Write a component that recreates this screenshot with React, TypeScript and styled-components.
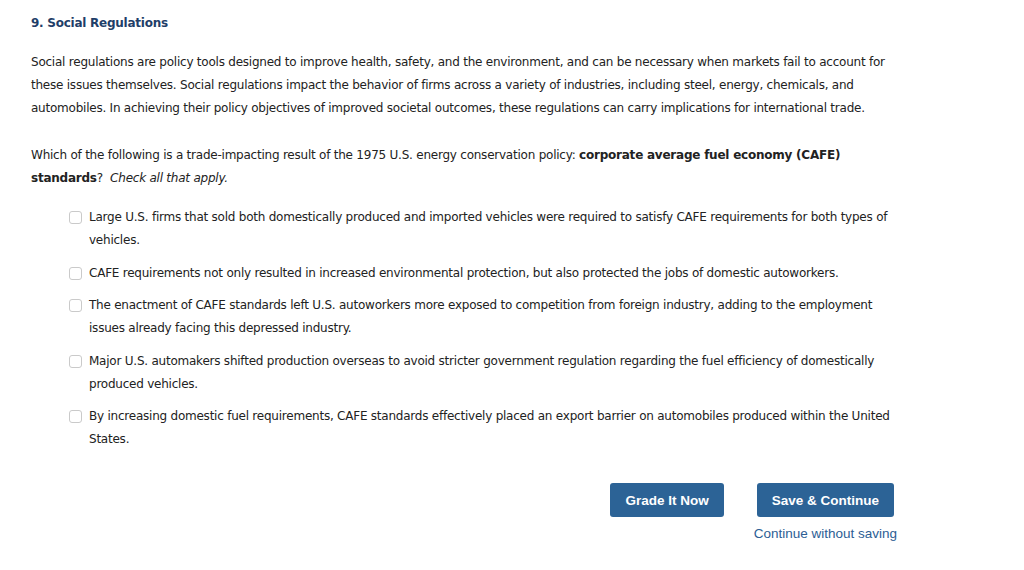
import React from "react";
import styled, { createGlobalStyle } from "styled-components";

const Global = createGlobalStyle`
  html, body { margin: 0; padding: 0; background: #fff; }
  body { font-family: Verdana, "DejaVu Sans", sans-serif; color: #222; }
`;

const Page = styled.div`
  padding: 15px 0 0 31px;
  width: 870px;
`;

const Heading = styled.h2`
  margin: 0;
  font-size: 12px;
  font-weight: bold;
  color: #1f3e68;
  line-height: 16px;
  letter-spacing: -0.25px;
`;

const Para = styled.p<{ $top: number }>`
  margin: ${(p) => p.$top}px 0 0 0;
  font-size: 12px;
  line-height: 23px;
  letter-spacing: -0.23px;
`;

const Options = styled.div`
  margin: 16px 0 0 38px;
  display: flex;
  flex-direction: column;
  gap: 9.6px;
`;

const Option = styled.label`
  display: flex;
  align-items: flex-start;
  gap: 7px;
  font-size: 12px;
  line-height: 23px;
  letter-spacing: -0.23px;
`;

const Box = styled.span`
  flex: none;
  width: 11px;
  height: 11px;
  margin-top: 5px;
  border: 1px solid #cacaca;
  border-radius: 3px;
  background: #fff;
`;

const Actions = styled.div`
  margin-top: 32px;
  margin-right: 4px;
  display: flex;
  justify-content: flex-end;
  gap: 30px;
  align-items: flex-start;
`;

const Col = styled.div`
  display: flex;
  flex-direction: column;
  align-items: center;
`;

const Button = styled.button`
  height: 34px;
  padding: 0 15px;
  border: none;
  border-radius: 3px;
  background: #2c6396;
  color: #fff;
  font-family: "Liberation Sans", Arial, sans-serif;
  font-weight: bold;
  font-size: 13.5px;
  cursor: pointer;
`;

const LinkText = styled.a`
  margin-top: 9px;
  font-family: "Liberation Sans", Arial, sans-serif;
  font-size: 13.5px;
  color: #2c5e94;
  text-decoration: none;
`;

const options = [
  "Large U.S. firms that sold both domestically produced and imported vehicles were required to satisfy CAFE requirements for both types of vehicles.",
  "CAFE requirements not only resulted in increased environmental protection, but also protected the jobs of domestic autoworkers.",
  "The enactment of CAFE standards left U.S. autoworkers more exposed to competition from foreign industry, adding to the employment issues already facing this depressed industry.",
  "Major U.S. automakers shifted production overseas to avoid stricter government regulation regarding the fuel efficiency of domestically produced vehicles.",
  "By increasing domestic fuel requirements, CAFE standards effectively placed an export barrier on automobiles produced within the United States.",
];

export default function App() {
  return (
    <>
      <Global />
      <Page>
        <Heading>9. Social Regulations</Heading>
        <Para $top={20}>
          Social regulations are policy tools designed to improve health, safety, and the environment, and can be necessary when markets fail to account for these issues themselves. Social regulations impact the behavior of firms across a variety of industries, including steel, energy, chemicals, and automobiles. In achieving their policy objectives of improved societal outcomes, these regulations can carry implications for international trade.
        </Para>
        <Para $top={24}>
          Which of the following is a trade-impacting result of the 1975 U.S. energy conservation policy: <b>corporate average fuel economy (CAFE) standards</b>?&nbsp; <i>Check all that apply.</i>
        </Para>
        <Options>
          {options.map((o) => (
            <Option key={o}>
              <Box />
              <span>{o}</span>
            </Option>
          ))}
        </Options>
        <Actions>
          <Col>
            <Button>Grade It Now</Button>
          </Col>
          <Col>
            <Button>Save &amp; Continue</Button>
            <LinkText href="#">Continue without saving</LinkText>
          </Col>
        </Actions>
      </Page>
    </>
  );
}
